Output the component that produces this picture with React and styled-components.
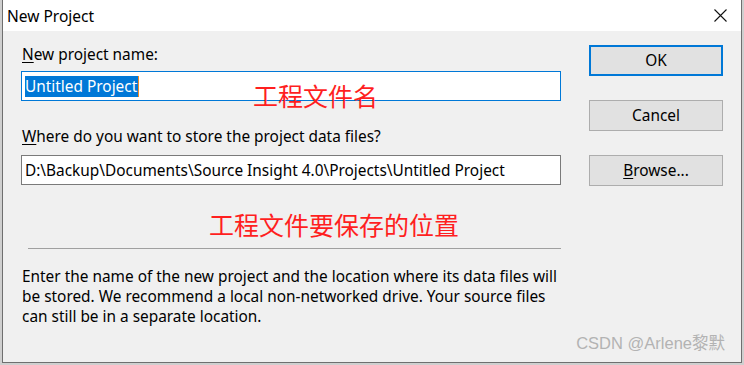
import React from "react";
import styled, { createGlobalStyle } from "styled-components";

const GlobalStyle = createGlobalStyle`
  html, body {
    margin: 0;
    padding: 0;
    width: 744px;
    height: 365px;
    overflow: hidden;
    background: #cfcfcf;
    font-family: "Noto Sans", "Noto Sans CJK SC", sans-serif;
  }
`;

const Screen = styled.div`
  width: 744px;
  height: 365px;
  padding-left: 2px;
  box-sizing: border-box;
`;

const Window = styled.div`
  position: relative;
  width: 740px;
  height: 363px;
  box-sizing: border-box;
  border: 1px solid #6f6f6f;
  border-top: none;
  background: #f0f0f0;
  display: flex;
  flex-direction: column;
`;

const TitleBar = styled.div`
  height: 31px;
  background: #fff;
  display: flex;
  align-items: center;
  justify-content: space-between;
  padding: 0 14px 0 4px;
  font-size: 15.5px;
  color: #000;
`;

const CloseIcon = () => (
  <svg width="13" height="13" viewBox="0 0 13 13">
    <path d="M0.5 0.5 L12.5 12.5 M12.5 0.5 L0.5 12.5" stroke="#111" strokeWidth="1.1" fill="none" />
  </svg>
);

const Body = styled.div`
  display: grid;
  grid-template-columns: 540px 134px;
  column-gap: 28px;
  padding: 14px 0 0 18px;
`;

const Column = styled.div`
  display: flex;
  flex-direction: column;
  position: relative;
`;

const Label = styled.div`
  font-size: 15.4px;
  line-height: 20px;
  color: #000;
  padding-left: 1px;
  margin-top: ${(p) => p.$top || 0}px;
  u {
    text-decoration: underline;
    text-underline-offset: 2px;
  }
`;

const Field = styled.div`
  height: 30px;
  box-sizing: border-box;
  margin-top: ${(p) => p.$top || 0}px;
  border: 1px solid ${(p) => (p.$focused ? "#0078d7" : "#7a7a7a")};
  background: #fff;
  display: flex;
  align-items: center;
  padding-left: 3px;
  font-size: 15.4px;
  color: #000;
  white-space: nowrap;
`;

const Selected = styled.span`
  background: #0078d7;
  color: #fff;
  line-height: 21px;
  padding-right: 1px;
  border-right: 1px solid #f08a24;
`;

const Note = styled.div`
  color: #ff1f1f;
  font-family: "Noto Sans CJK SC", sans-serif;
  font-size: 25px;
  line-height: 28px;
  white-space: nowrap;
`;

const FloatNote = styled(Note)`
  position: absolute;
  left: 232px;
  top: 36px;
`;

const PlaceNote = styled(Note)`
  margin-top: 25px;
  padding-left: 188px;
`;

const Separator = styled.div`
  margin: 10px 0 0 7px;
  height: 1px;
  background: #a0a0a0;
`;

const Paragraph = styled.p`
  margin: 18px 0 0 1px;
  font-size: 15.4px;
  line-height: 20px;
  color: #000;
`;

const Buttons = styled.div`
  display: flex;
  flex-direction: column;
  gap: 24px;
`;

const Button = styled.button`
  height: 31px;
  width: 134px;
  box-sizing: border-box;
  margin: 0;
  padding: 0;
  background: #e1e1e1;
  border: ${(p) => (p.$default ? "2px solid #0078d7" : "1px solid #adadad")};
  font-family: "Noto Sans", sans-serif;
  font-size: 15.4px;
  color: #000;
  u {
    text-decoration: underline;
    text-underline-offset: 2px;
  }
`;

const Watermark = styled.div`
  position: absolute;
  right: 16px;
  bottom: 8px;
  font-family: "Liberation Sans", "Noto Sans CJK SC", sans-serif;
  font-size: 16.5px;
  color: #b3b3b3;
`;

export default function App() {
  return (
    <Screen>
      <GlobalStyle />
      <Window>
        <TitleBar>
          <span>New Project</span>
          <CloseIcon />
        </TitleBar>
        <Body>
          <Column>
            <Label>
              <u>N</u>ew project name:
            </Label>
            <Field $focused $top={6}>
              <Selected>Untitled Project</Selected>
            </Field>
            <FloatNote>工程文件名</FloatNote>
            <Label $top={26}>
              <u>W</u>here do you want to store the project data files?
            </Label>
            <Field $top={8}>
              D:\Backup\Documents\Source Insight 4.0\Projects\Untitled Project
            </Field>
            <PlaceNote>工程文件要保存的位置</PlaceNote>
            <Separator />
            <Paragraph>
              Enter the name of the new project and the location where its data files will
              <br />
              be stored. We recommend a local non-networked drive. Your source files
              <br />
              can still be in a separate location.
            </Paragraph>
          </Column>
          <Buttons>
            <Button $default>OK</Button>
            <Button>Cancel</Button>
            <Button>
              <u>B</u>rowse...
            </Button>
          </Buttons>
        </Body>
        <Watermark>CSDN @Arlene黎默</Watermark>
      </Window>
    </Screen>
  );
}
